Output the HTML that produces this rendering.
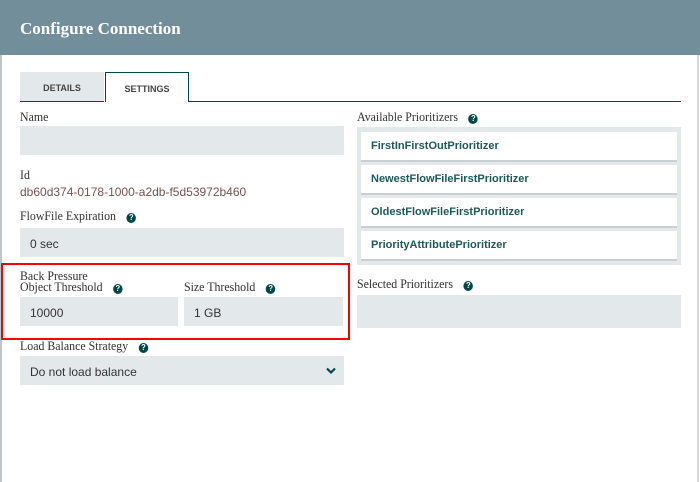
<!DOCTYPE html>
<html><head><style>
*{margin:0;padding:0;box-sizing:border-box}
body{width:700px;height:482px;background:#fff;position:relative;overflow:hidden;font-family:"Liberation Serif",serif;}
.a{position:absolute}
.hdr{left:0;top:0;width:700px;height:55px;background:#728e9b;color:#fff;font:bold 17px "Liberation Serif",serif;padding:19px 0 0 20px}
.lbl{font-size:12.5px;color:#333;transform:scaleX(.95);transform-origin:left}
.inp{background:#e3e8eb;font:12px "Liberation Sans",sans-serif;color:#333;padding:9px 0 0 10px}
.q{display:inline-block;width:10px;height:10px;border-radius:50%;background:#004849;color:#fff;font:bold 8px "Liberation Sans",sans-serif;text-align:center;line-height:10px;margin-left:8px;vertical-align:0px}
.it{left:361px;width:316px;height:30px;background:#fff;border-bottom:2px solid #c8cfd3;font:bold 11px "Liberation Sans",sans-serif;color:#1d5a5a;padding:8px 0 0 10px}
.tab{top:72px;height:30px;font:bold 9px "Liberation Sans",sans-serif;color:#444;text-align:center;padding-top:11px}
</style></head><body>
<div class="a" style="left:0;top:0;width:2px;height:482px;background:#bfc5c8"></div>
<div class="a" style="left:697px;top:0;width:2px;height:482px;background:#d5d9db"></div>
<div class="a hdr">Configure Connection</div>
<div class="a tab" style="left:20px;width:84px;background:#e3e8eb;border-bottom:1px solid #004849">DETAILS</div>
<div class="a tab" style="left:105px;width:84px;border:1px solid #004849;border-bottom:none;background:#fff">SETTINGS</div>
<div class="a" style="left:189px;top:101px;width:492px;height:1px;background:#004849"></div>
<div class="a lbl" style="left:20px;top:110px">Name</div>
<div class="a inp" style="left:20px;top:126px;width:324px;height:29px"></div>
<div class="a lbl" style="left:20px;top:168px">Id</div>
<div class="a" style="left:20px;top:185px;font:12px 'Liberation Sans',sans-serif;color:#775351">db60d374-0178-1000-a2db-f5d53972b460</div>
<div class="a lbl" style="left:20px;top:209px;width:200px">FlowFile Expiration <span class="q">?</span></div>
<div class="a inp" style="left:20px;top:228px;width:324px;height:29px">0 sec</div>
<div class="a" style="left:1px;top:263px;width:349px;height:77px;border:2px solid #f00"></div>
<div class="a lbl" style="left:20px;top:269px">Back Pressure</div>
<div class="a lbl" style="left:20px;top:280px;width:200px">Object Threshold <span class="q">?</span></div>
<div class="a lbl" style="left:184px;top:280px;width:200px">Size Threshold <span class="q">?</span></div>
<div class="a inp" style="left:20px;top:297px;width:158px;height:29px">10000</div>
<div class="a inp" style="left:184px;top:297px;width:159px;height:29px">1 GB</div>
<div class="a lbl" style="left:20px;top:339px;width:200px">Load Balance Strategy <span class="q">?</span></div>
<div class="a inp" style="left:20px;top:356px;width:324px;height:29px">Do not load balance
<svg style="position:absolute;right:8px;top:11px" width="10" height="8" viewBox="0 0 10 8"><path d="M1 1.5L5 5.5L9 1.5" stroke="#004849" stroke-width="2.2" fill="none"/></svg></div>
<div class="a lbl" style="left:357px;top:110px;width:200px">Available Prioritizers <span class="q">?</span></div>
<div class="a" style="left:357px;top:127px;width:324px;height:138px;background:#e3e8eb"></div>
<div class="a it" style="top:132px">FirstInFirstOutPrioritizer</div>
<div class="a it" style="top:165px">NewestFlowFileFirstPrioritizer</div>
<div class="a it" style="top:198px">OldestFlowFileFirstPrioritizer</div>
<div class="a it" style="top:231px">PriorityAttributePrioritizer</div>
<div class="a lbl" style="left:357px;top:277px;width:200px">Selected Prioritizers <span class="q">?</span></div>
<div class="a" style="left:357px;top:295px;width:324px;height:33px;background:#e3e8eb"></div>
</body></html>
